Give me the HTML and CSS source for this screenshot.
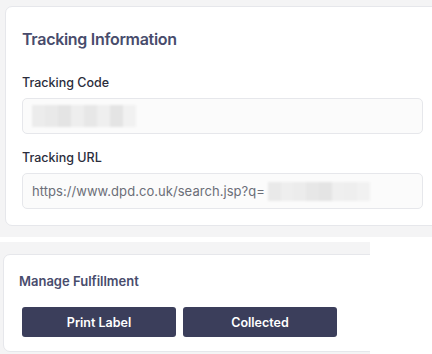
FILE: index.html
```html
<!DOCTYPE html>
<html>
<head>
<meta charset="utf-8">
<link rel="stylesheet" href="styles.css">
</head>
<body>
<div class="top-panel">
  <div class="card card-top">
    <h2 class="card-title">Tracking Information</h2>
    <div class="field">
      <label class="field-label">Tracking Code</label>
      <div class="input">
        <span class="blur blur-code">
          <i class="b1"></i><i class="b2"></i><i class="b3"></i><i class="b4"></i><i class="b5"></i><i class="b6"></i><i class="b3"></i><i class="b7"></i>
        </span>
      </div>
    </div>
    <div class="field">
      <label class="field-label">Tracking URL</label>
      <div class="input">
        <span class="input-text">https://www.dpd.co.uk/search.jsp?q=</span>
        <span class="blur blur-url">
          <i class="b2"></i><i class="b4"></i><i class="b1"></i><i class="b5"></i><i class="b3"></i><i class="b6"></i><i class="b4"></i><i class="b7"></i>
        </span>
      </div>
    </div>
  </div>
</div>
<div class="gap"></div>
<div class="bottom-panel">
  <div class="card card-bottom">
    <h3 class="card-subtitle">Manage Fulfillment</h3>
    <div class="actions">
      <button class="btn">Print Label</button>
      <button class="btn">Collected</button>
    </div>
  </div>
</div>
</body>
</html>
```
FILE: styles.css
```css
html, body {
  margin: 0;
  padding: 0;
  background: #ffffff;
  overflow: hidden;
  width: 432px;
  height: 354px;
  font-family: Inter, "Noto Sans", sans-serif;
}

.top-panel {
  background: #f4f4f5;
  height: 237px;
  padding: 6px 0 0 5px;
  box-sizing: border-box;
  overflow: hidden;
}

.card {
  background: #ffffff;
  border: 1px solid #e6e7eb;
  border-radius: 7px;
  box-sizing: border-box;
}

.card-top {
  width: 450px;
  height: 220px;
  padding: 22px 0 0 16px;
}

.card-title {
  margin: 0;
  font-size: 16px;
  font-weight: 600;
  color: #484c6c;
  line-height: 20px;
  letter-spacing: -0.3px;
}

.field {
  margin-top: 26px;
}
.field + .field {
  margin-top: 16px;
}

.field-label {
  display: block;
  font-size: 12.5px;
  font-weight: 500;
  color: #2b2d3c;
  line-height: 16px;
  margin-bottom: 7px;
}

.input {
  width: 401px;
  height: 36px;
  box-sizing: border-box;
  border: 1px solid #e6e7eb;
  border-radius: 5px;
  background: #fbfbfb;
  display: flex;
  align-items: center;
  padding-left: 9px;
}

.input-text {
  font-size: 13px;
  color: #6b6e78;
  letter-spacing: 0.05px;
}

.blur {
  display: flex;
  height: 22px;
  filter: blur(1px);
}
.blur i {
  display: block;
  height: 100%;
  width: 13px;
}
.blur-url { margin-left: 3px; height: 19px; }
.blur-url i { width: 12.75px; }

.b1 { background: #ececec; }
.b2 { background: #e9e9e9; }
.b3 { background: #e4e4e4; }
.b4 { background: #eeeeee; }
.b5 { background: #e7e7e7; }
.b6 { background: #efefef; }
.b7 { background: #f1f1f1; }

.gap {
  height: 5px;
  background: #ffffff;
}

.bottom-panel {
  width: 370px;
  height: 112px;
  background: #f4f4f5;
  padding: 12px 0 0 3px;
  box-sizing: border-box;
  overflow: hidden;
}

.card-bottom {
  width: 390px;
  height: 98px;
  padding: 18px 0 0 15px;
}

.card-subtitle {
  margin: 0;
  font-size: 13px;
  font-weight: 600;
  color: #484c6c;
  line-height: 16px;
}

.actions {
  display: flex;
  gap: 7px;
  margin-top: 18px;
  padding-left: 3px;
}

.btn {
  width: 154px;
  height: 30px;
  border: none;
  border-radius: 3px;
  background: #3b3e5b;
  color: #ffffff;
  font-family: Inter, "Noto Sans", sans-serif;
  font-size: 12.5px;
  font-weight: 600;
  padding: 0;
}
```
